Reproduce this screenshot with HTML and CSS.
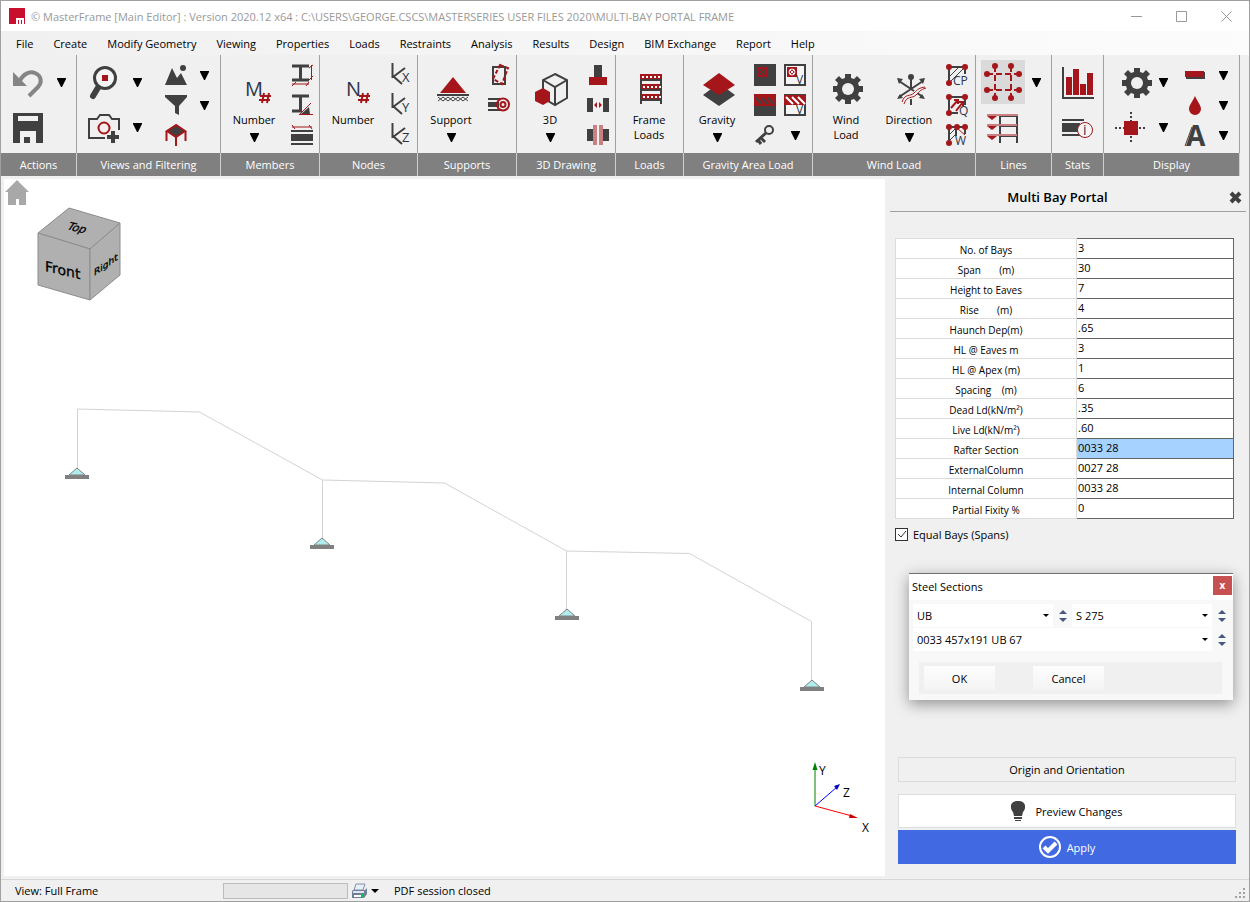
FILE: index.html
```html
<!DOCTYPE html>
<html lang="en">
<head>
  <meta charset="UTF-8">
  <title>MasterFrame [Main Editor]</title>
  <link rel="stylesheet" href="styles.css">
</head>
<body>
  <!-- shared shapes -->
  <svg class="defs" width="0" height="0" aria-hidden="true">
    <symbol id="down" viewBox="0 0 9 9"><path d="M0 0h9v1L5 9H4L0 1z"/></symbol>
    <symbol id="spin" viewBox="0 0 8 14"><path d="M4 1l4 4H0zM4 13l4-4H0z" fill="#46587c"/></symbol>
    <symbol id="caret" viewBox="0 0 6 3"><path d="M0 0h6L3 3z"/></symbol>
    <symbol id="gear" viewBox="0 0 30 30">
      <path d="M12 0h6v4l3 1 3-3 4 4-3 3 1 3h4v6h-4l-1 3 3 3-4 4-3-3-3 1v4h-6v-4l-3-1-3 3-4-4 3-3-1-3H0v-6h4l1-3-3-3 4-4 3 3 3-1z" fill="#404040"/>
      <circle cx="15" cy="15" r="6" fill="#f0f0f0"/>
    </symbol>
    <symbol id="axis" viewBox="0 0 20 22"><path d="M1.500 0v15M2 14L14 5M2 13l9 8" fill="none" stroke="#404040" stroke-width="2"/></symbol>
    <symbol id="support" viewBox="0 0 24 12" overflow="visible">
      <path d="M12 1l8 7H4z" fill="#afeeee" stroke="#808080"/><path d="M0 8h24v4H0z" fill="#808080"/>
    </symbol>
  </svg>

  <div class="window">
    <header class="titlebar">
      <svg class="logo" width="16" height="16"><path d="M0 0h16v16H0z" fill="#c8102e"/><path d="M8 16v-5h6v5M11 11v5" fill="none" stroke="#fff" stroke-width="2"/></svg>
      <h1>© MasterFrame [Main Editor] : Version 2020.12 x64 : C:\USERS\GEORGE.CSCS\MASTERSERIES USER FILES 2020\MULTI-BAY PORTAL FRAME</h1>
      <div class="window-buttons">
        <button aria-label="Minimize"><svg width="11" height="11"><path d="M0 5.500h11"/></svg></button>
        <button aria-label="Maximize"><svg width="11" height="11"><path d="M.5.500h10v10H.5z"/></svg></button>
        <button aria-label="Close"><svg width="11" height="11"><path d="M.5.500l10 10M10.500.500l-10 10"/></svg></button>
      </div>
    </header>

    <nav class="menubar">
      <button>File</button><button>Create</button><button>Modify Geometry</button><button>Viewing</button><button>Properties</button><button>Loads</button><button>Restraints</button><button>Analysis</button><button>Results</button><button>Design</button><button>BIM Exchange</button><button>Report</button><button>Help</button>
    </nav>

    <div class="ribbon">
      <section class="group actions">
        <div class="tools">
          <div class="two">
            <button aria-label="Undo"><svg width="32" height="32"><path d="M6 17C11 6 18 4 23 6c7 3 7 10 3 14l-9 9" fill="none" stroke="#858585" stroke-width="4"/><path d="M1 5v14h14z" fill="#858585"/></svg></button>
            <button aria-label="Save"><svg width="30" height="30"><path d="M0 0h30v30H0z" fill="#404040"/><path d="M5 3h20v5H5zM7 18h16v12h-6v-6h-6v6H7z" fill="#f0f0f0"/></svg></button>
          </div>
          <div class="two"><button aria-label="Undo list"><svg class="down"><use href="#down"/></svg></button></div>
        </div>
        <h2>Actions</h2>
      </section>

      <section class="group views">
        <div class="tools">
          <div class="two">
            <button aria-label="Zoom"><svg width="30" height="34"><path d="M10 20L4 30" stroke="#404040" stroke-width="6" stroke-linecap="round"/><circle cx="16" cy="12" r="10.500" fill="#f5f5f5" stroke="#404040" stroke-width="3"/><path d="M13 9h6v6h-6z" fill="#a4161a"/></svg></button>
            <button aria-label="Snapshot"><svg width="32" height="30"><path d="M17 25H1V6h8l3-4h9l3 4h7v11" fill="none" stroke="#404040" stroke-width="2"/><circle cx="16" cy="15" r="5.500" fill="none" stroke="#a4161a" stroke-width="2"/><path d="M25 18v12M19 24h12" stroke="#404040" stroke-width="4"/></svg></button>
          </div>
          <div class="two">
            <button aria-label="Zoom list"><svg class="down"><use href="#down"/></svg></button>
            <button aria-label="Snapshot list"><svg class="down"><use href="#down"/></svg></button>
          </div>
          <div class="three">
            <button aria-label="Scene"><svg width="22" height="22"><path d="M0 21L7 4l5 10 4-5 6 12z" fill="#404040"/><circle cx="18" cy="4" r="3" fill="#404040"/></svg></button>
            <button aria-label="Filter"><svg width="22" height="22"><path d="M0 1h22v2l-8 9v9l-4-2v-7L0 3z" fill="#404040"/></svg></button>
            <button aria-label="Work plane"><svg width="22" height="22"><path d="M1.500 7v10M11 13v9M20.500 7v10" stroke="#a4161a" stroke-width="2"/><path d="M11 1L2 7l9 6 9-6z" fill="#404040" stroke="#a4161a" stroke-width="2"/></svg></button>
          </div>
          <div class="three">
            <button aria-label="Scene list"><svg class="down"><use href="#down"/></svg></button>
            <button aria-label="Filter list"><svg class="down"><use href="#down"/></svg></button>
          </div>
        </div>
        <h2>Views and Filtering</h2>
      </section>

      <section class="group">
        <div class="tools">
          <button class="big">
            <svg width="32" height="32"><text x="5" y="23" font-size="20">M</text><path d="M20 23h11M19 27h11M24 20l-2 10M29 20l-2 10" stroke="#a4161a" stroke-width="2"/></svg>
            <span>Number</span><svg class="down"><use href="#down"/></svg>
          </button>
          <div class="three">
            <button aria-label="Section size"><svg width="22" height="22"><path d="M1 2h17M1 16h17M9.500 2v14" stroke="#404040" stroke-width="3"/><path d="M20.500 1v15M18 4l4-3M18 16l4-4M1 20h17M1 22l4-4M15 22l3-4" stroke="#a4161a" fill="none"/></svg></button>
            <button aria-label="Section axis"><svg width="22" height="22"><path d="M1 2h17M1 17h10M9.500 2v14" stroke="#404040" stroke-width="3"/><path d="M10 20l8-7 1 7z" fill="#404040"/><path d="M8 20.500h14M9 20L20 9" stroke="#a4161a"/></svg></button>
            <button aria-label="Member length"><svg width="22" height="22"><path d="M1 3h20M1 1l3 4M18 1l3 4" stroke="#a4161a"/><path d="M0 7h22M0 20h22" stroke="#404040" stroke-width="2"/><path d="M0 10h22v7H0z" fill="#404040"/></svg></button>
          </div>
        </div>
        <h2>Members</h2>
      </section>

      <section class="group">
        <div class="tools">
          <button class="big">
            <svg width="32" height="32"><text x="7" y="23" font-size="20">N</text><path d="M20 23h11M19 27h11M24 20l-2 10M29 20l-2 10" stroke="#a4161a" stroke-width="2"/></svg>
            <span>Number</span>
          </button>
          <div class="three">
            <button aria-label="Node X"><svg width="20" height="24"><use href="#axis" width="20" height="22"/><text x="11" y="19" font-size="13">X</text></svg></button>
            <button aria-label="Node Y"><svg width="20" height="24"><use href="#axis" width="20" height="22"/><text x="11" y="19" font-size="13">Y</text></svg></button>
            <button aria-label="Node Z"><svg width="20" height="24"><use href="#axis" width="20" height="22"/><text x="11" y="19" font-size="13">Z</text></svg></button>
          </div>
        </div>
        <h2>Nodes</h2>
      </section>

      <section class="group">
        <div class="tools">
          <button class="big">
            <svg width="32" height="32"><path d="M16 4l13 16H3z" fill="#a4161a"/><path d="M0 22h32" stroke="#404040" stroke-width="2"/><path d="M1 24l5 4 5-4 5 4 5-4 5 4 5-4M1 28l5-4 5 4 5-4 5 4 5-4 5 4" fill="none" stroke="#404040"/></svg>
            <span>Support</span><svg class="down"><use href="#down"/></svg>
          </button>
          <div class="three">
            <button aria-label="Rotate support"><svg width="22" height="24"><path d="M5 4h12v17H5z" fill="none" stroke="#404040" stroke-width="2"/><path d="M12 2l8 3-6 16-9-5z" fill="none" stroke="#a4161a" stroke-width="2" stroke-dasharray="4 2"/></svg></button>
            <button aria-label="Member release"><svg width="22" height="16"><path d="M0 2h13M0 13h13" stroke="#404040" stroke-width="2"/><path d="M0 5h11v5H0z" fill="#404040"/><circle cx="15" cy="7.500" r="6" fill="none" stroke="#a4161a" stroke-width="2"/><circle cx="15" cy="7.500" r="2.500" fill="none" stroke="#a4161a" stroke-width="2"/></svg></button>
          </div>
        </div>
        <h2>Supports</h2>
      </section>

      <section class="group">
        <div class="tools">
          <button class="big">
            <svg width="32" height="34"><path d="M19 1l12 6v18l-12 7-12-7V7zM7 7l12 7 12-7M19 14v18" fill="none" stroke="#404040" stroke-width="2"/><path d="M7 15l7 4v9l-7 4-8-4v-9z" fill="#a4161a"/></svg>
            <span>3D</span><svg class="down"><use href="#down"/></svg>
          </button>
          <div class="three">
            <button aria-label="Base plate"><svg width="18" height="20"><path d="M5 0h8v12H5z" fill="#404040"/><path d="M0 12h18v8H0z" fill="#a4161a"/></svg></button>
            <button aria-label="Splice gap"><svg width="22" height="14"><path d="M0 0h6v14H0zM16 0h6v14h-6z" fill="#404040"/><path d="M10 4v6L7 7zM12 4v6l3-3z" fill="#a4161a"/></svg></button>
            <button aria-label="End plates"><svg width="22" height="20"><path d="M0 4h7v12H0zM15 4h7v12h-7z" fill="#404040"/><path d="M6 0h4v20H6zM12 0h4v20h-4z" fill="#c98083"/></svg></button>
          </div>
        </div>
        <h2>3D Drawing</h2>
      </section>

      <section class="group">
        <div class="tools">
          <button class="big">
            <svg width="24" height="32"><path d="M2 2v29M22 2v29M2 7h20M2 17h20M2 27h20" stroke="#404040" stroke-width="2" fill="none"/><path d="M1 1h22v5H1zM3 11h18v5H3zM3 21h18v5H3z" fill="#a4161a"/><path d="M3 4h18M4 14h18M4 24h18" stroke="#fff" stroke-width="2" stroke-dasharray="2"/></svg>
            <span>Frame<br>Loads</span>
          </button>
        </div>
        <h2>Loads</h2>
      </section>

      <section class="group">
        <div class="tools">
          <button class="big">
            <svg width="32" height="34"><path d="M16 10l16 12-16 11L0 22z" fill="#404040"/><path d="M16 0l16 12-16 10L0 12z" fill="#a4161a"/></svg>
            <span>Gravity</span><svg class="down"><use href="#down"/></svg>
          </button>
          <div class="three">
            <button aria-label="Point area load"><svg width="22" height="22"><path d="M0 0h22v22H0z" fill="#404040"/><path d="M3 3h10v10H3z" fill="#a4161a"/><circle cx="8" cy="8" r="3" fill="none" stroke="#404040"/><path d="M6 6l4 4M10 6l-4 4" stroke="#404040"/></svg></button>
            <button aria-label="Strip area load"><svg width="22" height="22"><path d="M0 0h22v22H0z" fill="#404040"/><path d="M0 0h22v12H0z" fill="#a4161a"/><path d="M2 4l6 6M8 4l6 6M14 4l6 6" stroke="#404040" stroke-width="2"/></svg></button>
            <button aria-label="Key"><svg width="20" height="20"><circle cx="14" cy="5" r="4" fill="none" stroke="#404040" stroke-width="2"/><path d="M11 8L1 17M6 13l4 4M3 15l3 4" stroke="#404040" stroke-width="3"/></svg></button>
          </div>
          <div class="three">
            <button aria-label="Void point load"><svg width="22" height="22"><path d="M1 1h20v20H1z" fill="#f5f5f5" stroke="#404040" stroke-width="2"/><path d="M3 3h10v10H3z" fill="#a4161a"/><circle cx="8" cy="8" r="3" fill="none" stroke="#fff"/><path d="M6 6l4 4M10 6l-4 4" stroke="#fff"/><text x="12" y="20" font-size="12">V</text></svg></button>
            <button aria-label="Void strip load"><svg width="22" height="22"><path d="M1 1h20v20H1z" fill="#f5f5f5" stroke="#404040" stroke-width="2"/><path d="M0 1h22v10H0z" fill="#a4161a"/><path d="M2 3l7 7M8 3l7 7M14 3l7 7" stroke="#fff" stroke-width="2"/><text x="12" y="20" font-size="12">V</text></svg></button>
            <button aria-label="Area load list"><svg class="down"><use href="#down"/></svg></button>
          </div>
        </div>
        <h2>Gravity Area Load</h2>
      </section>

      <section class="group wind">
        <div class="tools">
          <button class="big"><svg width="30" height="32"><use href="#gear" width="30" height="30" y="1"/></svg><span>Wind<br>Load</span></button>
          <button class="big">
            <svg width="30" height="32"><path d="M15 4v12M15 26v6M3 8l24 16M27 8L3 24" stroke="#404040" stroke-width="2"/><path d="M1 5l6 1-4 5zM29 5l-6 1 4 5zM1 26l3-5 3 4zM29 26l-3-5-3 4z" fill="#404040"/><circle cx="15" cy="4" r="3" fill="#404040"/><path d="M7 30c3-10 8-5 12-10s5-5 11-6" fill="none" stroke="#f0f0f0" stroke-width="4"/><path d="M6 29c3-9 8-5 12-9s5-5 11-6M8 31c3-9 8-5 12-9s4-5 10-7" fill="none" stroke="#a4161a"/></svg>
            <span>Direction</span><svg class="down"><use href="#down"/></svg>
          </button>
          <div class="three">
            <button aria-label="Pressure coefficients"><svg width="22" height="22"><path d="M3 19V3h16v7" fill="none" stroke="#404040" stroke-width="2"/><path d="M4 12l8-8M4 18L18 4" stroke="#404040"/><circle cx="3" cy="3" r="3"/><circle cx="19" cy="3" r="3"/><circle cx="3" cy="19" r="3"/><text x="7" y="21" font-size="12">CP</text></svg></button>
            <button aria-label="Dynamic pressure"><svg width="22" height="22"><path d="M3 19V3h16v8M12 19H3" fill="none" stroke="#404040" stroke-width="2"/><path d="M5 14l7-8M10 17l7-9M8 6h4v4M13 8h4v4" fill="none" stroke="#a4161a" stroke-width="2"/><circle cx="3" cy="3" r="3"/><circle cx="19" cy="3" r="3"/><circle cx="3" cy="19" r="3"/><text x="13" y="21" font-size="12">Q</text></svg></button>
            <button aria-label="Wind pressure"><svg width="22" height="22"><path d="M3 19V3h16v7M10 3v9" fill="none" stroke="#404040" stroke-width="2"/><path d="M4 10l5-5M4 16l6-6" stroke="#404040"/><path d="M12 5l7 6" stroke="#a4161a"/><circle cx="3" cy="3" r="3"/><circle cx="11" cy="3" r="3"/><circle cx="19" cy="3" r="3"/><circle cx="3" cy="19" r="3"/><text x="9" y="21" font-size="12">W</text></svg></button>
          </div>
        </div>
        <h2>Wind Load</h2>
      </section>

      <section class="group lines">
        <div class="tools">
          <div class="two">
            <button class="active" aria-label="Grid lines"><svg width="38" height="38"><path d="M11 3v32M27 3v32M3 11h32M3 27h32" stroke="#a4161a" stroke-width="2" stroke-dasharray="6 3"/><circle cx="11" cy="3" r="3"/><circle cx="27" cy="3" r="3"/><circle cx="11" cy="35" r="3"/><circle cx="27" cy="35" r="3"/><circle cx="3" cy="11" r="3"/><circle cx="35" cy="11" r="3"/><circle cx="3" cy="27" r="3"/><circle cx="35" cy="27" r="3"/></svg></button>
            <button aria-label="Levels"><svg width="32" height="30"><path d="M13 30V3h17v27M13 13h17M13 23h17" fill="none" stroke="#404040" stroke-width="2"/><path d="M0 2h31M0 12h30M0 22h30" stroke="#c98083" stroke-width="2"/><path d="M0 3h10l-5 4zM0 13h10l-5 4zM0 23h10l-5 4z" fill="#a4161a"/></svg></button>
          </div>
          <div class="two"><button aria-label="Grid list"><svg class="down"><use href="#down"/></svg></button></div>
        </div>
        <h2>Lines</h2>
      </section>

      <section class="group stats">
        <div class="tools">
          <div class="two">
            <button aria-label="Charts"><svg width="32" height="32"><path d="M1 0v31h31" fill="none" stroke="#404040" stroke-width="2"/><path d="M4 10h6v18H4zM11 2h6v26h-6zM18 17h6v11h-6zM25 6h6v22h-6z" fill="#a4161a"/></svg></button>
            <button aria-label="Section info"><svg width="32" height="20"><path d="M0 2h22M0 17h22" stroke="#404040" stroke-width="2"/><path d="M0 5h18v9H0z" fill="#404040"/><circle cx="23" cy="12" r="7.500" fill="#f5f5f5" stroke="#a4161a"/><text x="21" y="17" font-size="14">i</text></svg></button>
          </div>
        </div>
        <h2>Stats</h2>
      </section>

      <section class="group display">
        <div class="tools">
          <div class="two">
            <button aria-label="Display settings"><svg width="30" height="30"><use href="#gear" width="30" height="30"/></svg></button>
            <button aria-label="Node display"><svg width="44" height="34"><path d="M16 1v32M0 17h32" stroke="#404040" stroke-width="2" stroke-dasharray="2"/><path d="M9 10h14v14H9z" fill="#a4161a"/></svg></button>
          </div>
          <div class="two">
            <button aria-label="Settings list"><svg class="down"><use href="#down"/></svg></button>
            <button aria-label="Node display list"><svg class="down"><use href="#down"/></svg></button>
          </div>
          <div class="three">
            <button aria-label="Member colour"><svg width="20" height="8"><path d="M1 1h19v7H1z" fill="#404040"/><path d="M0 0h19v6H0z" fill="#a4161a"/></svg></button>
            <button aria-label="Ink"><svg width="14" height="22"><path d="M7 2c2 5 6 9 6 13a6 6 0 01-12 0c0-4 4-8 6-13z" fill="#a4161a"/></svg></button>
            <button aria-label="Font"><svg width="22" height="24"><text class="letter-a" x="2" y="23" font-size="28">A</text><path d="M1 23L8 4" stroke="#404040"/></svg></button>
          </div>
          <div class="three">
            <button aria-label="Colour list"><svg class="down"><use href="#down"/></svg></button>
            <button aria-label="Ink list"><svg class="down"><use href="#down"/></svg></button>
            <button aria-label="Font list"><svg class="down"><use href="#down"/></svg></button>
          </div>
        </div>
        <h2>Display</h2>
      </section>
    </div>

    <main class="workspace">
      <!-- model view -->
      <svg class="model">
        <path d="M13 1l12 12h-3v13h-7v-6h-3v6H4V13H1z" fill="#a8a8a8"/>
        <g class="cube">
          <path d="M34 54l31-25 51 15-30 26z"/>
          <path d="M34 54l52 16v51l-52-15z"/>
          <path d="M86 70l30-26v52l-30 25z"/>
          <text transform="translate(62 50) rotate(14) skewX(-20)" font-size="11">Top</text>
          <text transform="translate(41 92) skewY(13)" font-size="14">Front</text>
          <text transform="translate(90 97) skewY(-35)" font-size="9">Right</text>
        </g>
        <path class="frame" d="M73.500 290v-60l122 3 123 68v60M318.500 301l122 3 122 68v60M562.500 372l123 2.500 122 68V502"/>
        <use href="#support" x="61" y="288" width="24" height="12"/>
        <use href="#support" x="306" y="358" width="24" height="12"/>
        <use href="#support" x="551" y="429" width="24" height="12"/>
        <use href="#support" x="796" y="500" width="24" height="12"/>
        <g class="triad">
          <path d="M811 627v-38" stroke="#008000"/><path d="M808.500 591l2.500-8 2.500 8z" fill="#008000"/>
          <path d="M811 627l22-19" stroke="#00f"/><path d="M836 605l-6 2 3 4z" fill="#0000c0"/>
          <path d="M811 627l37 10" stroke="#f00"/><path d="M854 639l-8-4-1 4z" fill="#c00"/>
          <text x="815" y="596">Y</text><text x="839" y="618">Z</text><text x="858" y="653">X</text>
        </g>
      </svg>

      <aside class="panel">
        <div class="panel-head">
          <h3>Multi Bay Portal</h3>
          <button aria-label="Close panel"><svg width="13" height="13"><path d="M2 2l9 9M11 2l-9 9" stroke="#404040" stroke-width="4"/></svg></button>
        </div>

        <table class="props">
          <tr><th><label for="bays">No. of Bays</label></th><td><input id="bays" value="3"></td></tr>
          <tr><th><label for="span">Span       (m)</label></th><td><input id="span" value="30"></td></tr>
          <tr><th><label for="height">Height to Eaves</label></th><td><input id="height" value="7"></td></tr>
          <tr><th><label for="rise">Rise       (m)</label></th><td><input id="rise" value="4"></td></tr>
          <tr><th><label for="haunch">Haunch Dep(m)</label></th><td><input id="haunch" value=".65"></td></tr>
          <tr><th><label for="eaves">HL @ Eaves m</label></th><td><input id="eaves" value="3"></td></tr>
          <tr><th><label for="apex">HL @ Apex (m)</label></th><td><input id="apex" value="1"></td></tr>
          <tr><th><label for="spacing">Spacing    (m)</label></th><td><input id="spacing" value="6"></td></tr>
          <tr><th><label for="dead">Dead Ld(kN/m²)</label></th><td><input id="dead" value=".35"></td></tr>
          <tr><th><label for="live">Live Ld(kN/m²)</label></th><td><input id="live" value=".60"></td></tr>
          <tr><th><label for="rafter">Rafter Section</label></th><td><input id="rafter" class="selected" value="0033 28"></td></tr>
          <tr><th><label for="external">ExternalColumn</label></th><td><input id="external" value="0027 28"></td></tr>
          <tr><th><label for="internal">Internal Column</label></th><td><input id="internal" value="0033 28"></td></tr>
          <tr><th><label for="fixity">Partial Fixity %</label></th><td><input id="fixity" value="0"></td></tr>
        </table>

        <div class="check">
          <input type="checkbox" id="equal" checked>
          <svg width="13" height="13"><path d="M3 6l3 3 5-6"/></svg>
          <label for="equal">Equal Bays (Spans)</label>
        </div>

        <div class="dialog">
          <div class="dialog-head"><h4>Steel Sections</h4><button aria-label="Close">x</button></div>
          <div class="pickers">
            <div class="picker"><select aria-label="Section type"><option>UB</option></select><svg><use href="#caret"/></svg></div>
            <button class="spin" aria-label="Change type"><svg><use href="#spin"/></svg></button>
            <div class="picker"><select aria-label="Steel grade"><option>S 275</option></select><svg><use href="#caret"/></svg></div>
            <button class="spin" aria-label="Change grade"><svg><use href="#spin"/></svg></button>
            <div class="picker wide"><select aria-label="Section"><option>0033 457x191 UB 67</option></select><svg><use href="#caret"/></svg></div>
            <button class="spin" aria-label="Change section"><svg><use href="#spin"/></svg></button>
          </div>
          <div class="dialog-buttons"><button>OK</button><button>Cancel</button></div>
        </div>

        <div class="panel-buttons">
          <button class="origin">Origin and Orientation</button>
          <button class="preview"><svg width="14" height="21"><path d="M7 0c9 0 8 8 5 11l-1 4H3l-1-4C-1 8-2 0 7 0zM3 16h8v2H3zM4 19h6v1H4z" fill="#404040"/></svg>Preview Changes</button>
          <button class="apply"><svg width="22" height="22"><circle cx="11" cy="11" r="10" fill="none" stroke="#fff" stroke-width="2"/><path d="M5 11l4 4 8-8" fill="none" stroke="#fff" stroke-width="4"/></svg>Apply</button>
        </div>
      </aside>
    </main>

    <footer class="statusbar">
      <span class="view-name">View: Full Frame</span>
      <div class="progress"></div>
      <button aria-label="Print"><svg width="16" height="16"><path d="M5 1h9l-2 6H3z" fill="#e8f0fa" stroke="#8090a8"/><path d="M2 7h12l2-2v6l-3 4H1V8z" fill="#6f7f98"/><path d="M2 8h11v2H2z" fill="#dfe6f0"/><path d="M3 12h8v2H3z" fill="#fff"/><path d="M10 11h3v3h-3z" fill="#0c3"/></svg></button>
      <button class="print-list" aria-label="Print list"><svg width="8" height="4"><use href="#caret" width="8" height="4"/></svg></button>
      <span>PDF session closed</span>
      <svg class="grip" width="11" height="11"><path d="M8 0h2v2H8zM4 4h2v2H4zM8 4h2v2H8zM0 8h2v2H0zM4 8h2v2H4zM8 8h2v2H8z" fill="#a0a0a0"/></svg>
    </footer>
  </div>
</body>
</html>
```

FILE: styles.css
```css
* {
  box-sizing: border-box;
}
body {
  margin: 0;
  font-family: "Open Sans", "Noto Sans", sans-serif;
  font-size: 11px;
  line-height: 15px;
  color: #000;
  background: #f0f0f0;
}
h1, h2, h3, h4 {
  margin: 0;
  font-size: 11px;
  font-weight: normal;
}
button, input, select {
  font: inherit;
  color: inherit;
  margin: 0;
  padding: 0;
  border: none;
  background: none;
}
svg {
  display: block;
  flex: none;
}
.defs {
  position: absolute;
}
.window {
  min-height: 100vh;
  display: flex;
  flex-direction: column;
  border: 1px solid #a0a0a0;
}

/* title and menu */
.titlebar {
  display: flex;
  align-items: center;
  height: 30px;
  padding-left: 8px;
  background: #fff;
}
.titlebar h1 {
  flex: 1;
  margin-left: 6px;
  color: #999;
  white-space: nowrap;
}
.window-buttons {
  display: flex;
}
.window-buttons button {
  width: 45px;
  height: 28px;
  display: grid;
  place-items: center;
}
.window-buttons path {
  fill: none;
  stroke: #999;
}
.menubar {
  display: flex;
  gap: 20px;
  height: 24px;
  padding-left: 15px;
  background: linear-gradient(to right, #f0f0f0, #fcfcfc);
}

/* ribbon */
.ribbon {
  display: grid;
  grid-template-columns: 76px 144px 99px 98px 99px 99px 68px 129px 163px 76px 52px 136px;
  height: 124px;
}
.tools {
  display: grid;
  grid-template-columns: 66px 30px 30px;
  height: 98px;
  padding-top: 5px;
  border-right: 1px solid #a0a0a0;
}
.tools svg {
  overflow: visible;
}
.group h2 {
  height: 23px;
  line-height: 23px;
  text-align: center;
  color: #fff;
  background: #808080;
  border-right: 1px solid #d0d0d0;
}
.actions .tools {
  grid-template-columns: 36px 30px;
  padding-left: 9px;
}
.views .tools {
  grid-template-columns: 35px 33px 44px 12px;
  padding-left: 9px;
}
.wind .tools {
  grid-template-columns: 66px 60px 36px;
}
.lines .tools {
  grid-template-columns: 54px 12px;
}
.stats .tools {
  grid-template-columns: 51px;
}
.display .tools {
  grid-template-columns: 36px 16px 48px 9px;
  padding-left: 15px;
}
.two, .three {
  display: grid;
  grid-template-rows: 45px 45px;
  justify-items: center;
  justify-content: center;
}
.three {
  grid-template-rows: 30px 30px 30px;
}
.two button, .three button {
  display: grid;
  place-items: center;
}
.two .active {
  width: 44px;
  height: 44px;
  background: #dadada;
}
.big {
  display: flex;
  flex-direction: column;
  align-items: center;
  height: 90px;
  padding-top: 13px;
}
.big svg:first-child {
  height: 34px;
  margin-left: 4px;
}
.big span {
  margin: 5px 0 6px;
}
.down {
  width: 9px;
  height: 9px;
}
.tools text {
  fill: #2b3547;
}
.tools circle:not([fill]) {
  fill: #a4161a;
}
.tools .letter-a {
  font-weight: bold;
  fill: #404040;
}

/* workspace */
.workspace {
  flex: 1;
  display: flex;
}
.model {
  flex: 1;
  min-width: 0;
  height: auto;
  margin: 0 0 3px 3px;
  background: #fff;
}
.cube path {
  fill: #b0b0b0;
  stroke: #8c8c8c;
}
.cube text {
  font-family: "DejaVu Sans", sans-serif;
  stroke: #000;
  stroke-width: 0.3px;
}
.frame {
  fill: none;
  stroke: #d3d3d3;
}
.triad text {
  font-size: 12px;
}
.panel {
  width: 364px;
  display: flex;
  flex-direction: column;
}
.panel-head {
  display: flex;
  align-items: center;
  height: 33px;
  margin: 0 3px 0 5px;
  padding-top: 4px;
  border-bottom: 1px solid #a0a0a0;
}
.panel-head h3 {
  flex: 1;
  text-align: center;
  font-size: 13px;
  font-weight: 600;
}
.panel-head button {
  padding: 4px;
}

/* property table */
.props {
  width: 339px;
  margin: 26px 0 0 10px;
  border-collapse: collapse;
  table-layout: fixed;
  background: #fff;
}
.props th {
  width: 181px;
  height: 20px;
  padding: 3px 0 0;
  border: 1px solid #dcdcdc;
  font-size: 10px;
  line-height: 14px;
  font-weight: normal;
  white-space: pre;
}
.props td {
  padding: 0;
  border: 1px solid #646464;
}
.props input {
  display: block;
  width: 100%;
  height: 19px;
  padding: 0 0 3px 1px;
}
.props .selected {
  background: #a6d2ff;
}
.check {
  display: flex;
  align-items: center;
  height: 15px;
  margin: 8px 0 0 10px;
}
.check input {
  appearance: none;
  width: 13px;
  height: 13px;
  border: 1px solid #333;
  background: #fff;
}
.check svg {
  margin-left: -13px;
  pointer-events: none;
}
.check path {
  fill: none;
  stroke: #333;
}
.check label {
  margin-left: 5px;
}

/* steel sections */
.dialog {
  margin: 31px 16px 0 24px;
  padding-bottom: 6px;
  border-top: 1px solid #707070;
  background: #f8f8f8;
  box-shadow: 0 4px 14px rgba(0, 0, 0, 0.4);
}
.dialog-head {
  display: flex;
  justify-content: space-between;
  height: 26px;
  padding: 2px 1px 0 3px;
  background: #fff;
}
.dialog-head h4 {
  line-height: 21px;
}
.dialog-head button {
  width: 19px;
  height: 19px;
  color: #fff;
  font-size: 10px;
  font-weight: bold;
  line-height: 15px;
  background: #c75050;
}
.pickers {
  display: grid;
  grid-template-columns: 1fr 19px 1fr 19px;
  row-gap: 1px;
  padding: 4px 2px 0 4px;
}
.picker {
  display: flex;
  align-items: center;
  height: 23px;
  background: #fff;
}
.picker.wide {
  grid-column: span 3;
}
.picker select {
  appearance: none;
  width: 100%;
  padding-left: 4px;
}
.picker svg {
  width: 6px;
  height: 3px;
  margin: 0 4px 0 -10px;
  pointer-events: none;
}
.spin {
  display: grid;
  place-items: center;
}
.spin svg {
  width: 8px;
  height: 14px;
}
.dialog-buttons {
  display: flex;
  gap: 38px;
  margin: 11px 11px 0 10px;
  padding: 4px 5px;
  background: #f0f0f0;
}
.dialog-buttons button {
  width: 71px;
  height: 24px;
  background: linear-gradient(#fdfdfd, #f4f4f4);
}

.panel-buttons {
  display: flex;
  flex-direction: column;
  margin: auto 13px 15px;
}
.panel-buttons button {
  display: flex;
  align-items: center;
  justify-content: center;
  height: 34px;
  border: 1px solid #dcdcdc;
}
.panel-buttons .origin {
  height: 25px;
  margin-bottom: 12px;
}
.panel-buttons .preview {
  gap: 10px;
  margin-bottom: 2px;
  background: #fff;
}
.panel-buttons .apply {
  gap: 6px;
  color: #fff;
  border-color: #4169e1;
  background: #4169e1;
}

/* status bar */
.statusbar {
  display: flex;
  align-items: center;
  height: 22px;
  padding: 0 1px 0 14px;
  border-top: 1px solid #d7d7d7;
}
.view-name {
  width: 208px;
}
.progress {
  width: 125px;
  height: 16px;
  margin-right: 3px;
  border: 1px solid #bcbcbc;
  background: #e6e6e6;
}
.print-list {
  margin: 0 15px 0 4px;
}
.grip {
  margin: auto 2px 2px auto;
}
```
